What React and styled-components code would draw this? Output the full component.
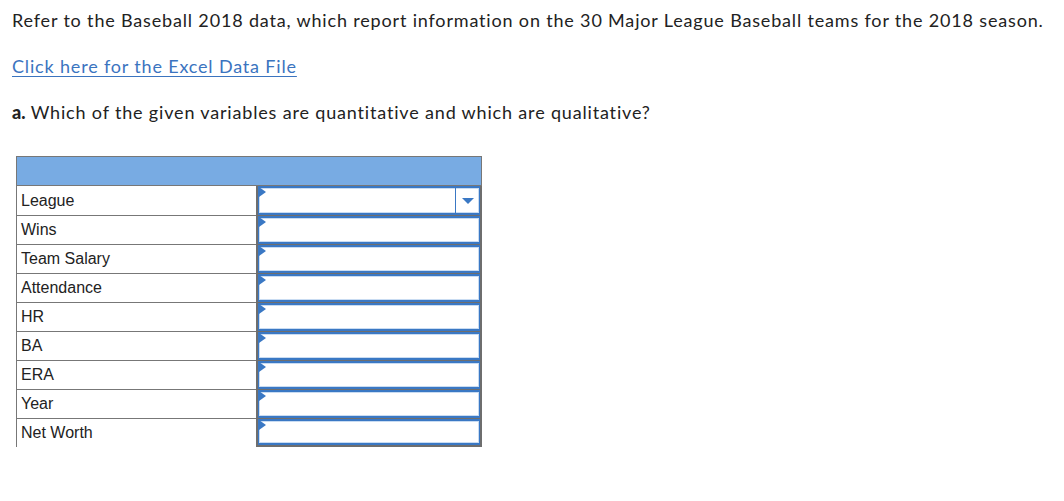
import React from "react";
import styled, { createGlobalStyle } from "styled-components";

const Global = createGlobalStyle`
  html, body { margin: 0; padding: 0; background: #fff; }
  body { font-family: Lato, "Open Sans", sans-serif; color: #222; }
`;

const Page = styled.div`
  padding: 8px 0 0 12px;
`;

const Para = styled.p`
  margin: 0 0 ${(p) => p.$gap || 22}px 0;
  font-size: 18px;
  line-height: 24px;
  letter-spacing: 0.83px;
`;

const Link = styled.a`
  color: #3b74bf;
  text-decoration: underline;
  text-underline-offset: 3px;
  cursor: pointer;
`;

const Label = styled.b`
  font-weight: 900;
  letter-spacing: 0;
`;

const Table = styled.div`
  margin: 0 0 0 4px;
  width: 466px;
  font-family: "Liberation Sans", Arial, sans-serif;
  font-size: 16px;
  color: #222;
`;

const Header = styled.div`
  height: 28px;
  background: #78abe3;
  border: 1px solid #777;
`;

const Row = styled.div`
  display: grid;
  grid-template-columns: 240px 226px;
  height: 29px;
`;

const NameCell = styled.div`
  border-left: 1px solid #777;
  border-top: ${(p) => (p.$first ? "none" : "1px solid #777")};
  padding-left: 4px;
  display: flex;
  align-items: center;
  box-sizing: border-box;
`;

const AnswerCell = styled.div`
  border-left: 2px solid #6e6e6e;
  border-right: 2px solid #6e6e6e;
  border-top: ${(p) => (p.$first ? "none" : "1px solid #6e6e6e")};
  border-bottom: ${(p) => (p.$last ? "2px solid #6e6e6e" : "none")};
  box-sizing: border-box;
  position: relative;
  display: flex;
`;

const Input = styled.div`
  flex: 1;
  border: 1px solid #3a78c4;
  border-top-width: 2px;
  border-bottom-width: 2px;
  box-shadow: inset 0 0 0 1px #c9dcf2;
  background: #fff;
  display: flex;
  justify-content: flex-end;
`;

const Marker = styled.span`
  position: absolute;
  left: 1px;
  top: 1px;
  width: 0;
  height: 0;
  border-top: 5px solid transparent;
  border-bottom: 5px solid transparent;
  border-left: 7px solid #3a78c4;
`;

const DropButton = styled.div`
  width: 23px;
  border-left: 1px solid #3a78c4;
  display: flex;
  align-items: center;
  justify-content: center;
`;

const Arrow = styled.span`
  width: 0;
  height: 0;
  border-left: 6px solid transparent;
  border-right: 6px solid transparent;
  border-top: 6px solid #3a78c4;
`;

const rows = [
  "League",
  "Wins",
  "Team Salary",
  "Attendance",
  "HR",
  "BA",
  "ERA",
  "Year",
  "Net Worth",
];

export default function App() {
  return (
    <>
      <Global />
      <Page>
        <Para>
          Refer to the Baseball 2018 data, which report information on the 30
          Major League Baseball teams for the 2018 season.
        </Para>
        <Para>
          <Link>Click here for the Excel Data File</Link>
        </Para>
        <Para $gap={32}>
          <Label>a.</Label> Which of the given variables are quantitative and
          which are qualitative?
        </Para>
        <Table>
          <Header />
          {rows.map((name, i) => (
            <Row key={name}>
              <NameCell $first={i === 0}>{name}</NameCell>
              <AnswerCell $first={i === 0} $last={i === rows.length - 1}>
                <Input>
                  {i === 0 && (
                    <DropButton>
                      <Arrow />
                    </DropButton>
                  )}
                </Input>
                <Marker />
              </AnswerCell>
            </Row>
          ))}
        </Table>
      </Page>
    </>
  );
}
